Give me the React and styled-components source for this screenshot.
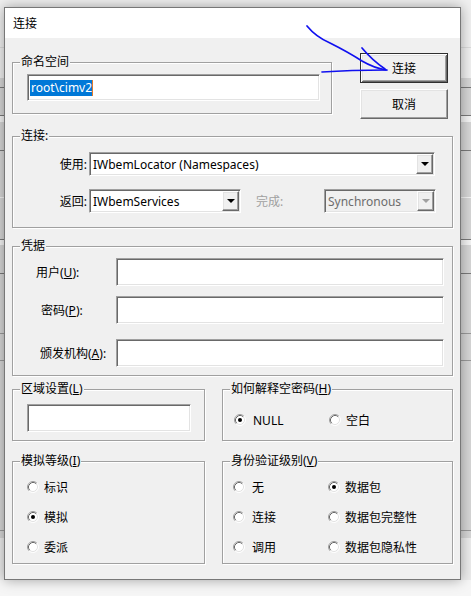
import React from "react";
import styled, { createGlobalStyle, css } from "styled-components";

const GlobalStyle = createGlobalStyle`
  html, body { margin: 0; padding: 0; }
  body {
    font-family: "Noto Sans", "Noto Sans CJK SC", sans-serif;
    font-size: 12px;
    color: #000;
  }
  * { box-sizing: border-box; }
`;

const raised = css`
  background: #f0f0f0;
  border: 1px solid;
  border-color: #ffffff #696969 #696969 #ffffff;
  box-shadow: inset -1px -1px 0 #a0a0a0, inset 1px 1px 0 #e3e3e3;
`;

const sunken = css`
  border: 1px solid;
  border-color: #a0a0a0 #ffffff #ffffff #a0a0a0;
  box-shadow: inset 1px 1px 0 #696969, inset -1px -1px 0 #e3e3e3;
`;

const Desktop = styled.div`
  position: relative;
  width: 471px;
  height: 596px;
  overflow: hidden;
  padding: 7px 0 0 4px;
  background:
    linear-gradient(to bottom,
      transparent 0 87px, #7a7a7a 87px 88px, transparent 88px 115px,
      #7a7a7a 115px 116px, #f4f4f4 116px 122px, transparent 122px 150px,
      #7a7a7a 150px 151px, transparent 151px 197px, #f4f4f4 197px 198px,
      transparent 198px 239px, #7a7a7a 239px 240px, #f4f4f4 240px 245px,
      transparent 245px 273px, #7a7a7a 273px 274px, transparent 274px 333px,
      #9a9a9a 333px 334px, transparent 334px 360px, #9a9a9a 360px 361px,
      transparent 361px 530px, #9a9a9a 530px 531px, transparent 531px),
    linear-gradient(to bottom,
      #f0f0f0 0 47px, #dcdcdc 47px 48px, #f0f0f0 48px 78px,
      #d6d6d6 78px 538px, #ececec 538px 580px, #f6f6f6 580px);
`;

const Dialog = styled.div`
  width: 457px;
  height: 573px;
  border: 1px solid #777777;
  background: #f0f0f0;
  box-shadow: 0 0 12px rgba(0, 0, 0, 0.35);
  display: flex;
  flex-direction: column;
`;

const TitleBar = styled.div`
  height: 30px;
  background: #ffffff;
  padding-left: 8px;
  display: flex;
  align-items: center;
  font-size: 12px;
`;

const Body = styled.div`
  flex: 1;
  padding: 15px 0 0 7px;
  display: flex;
  flex-direction: column;
`;

const Row = styled.div`
  display: flex;
  align-items: flex-start;
  gap: ${(p) => p.$gap || 0}px;
  margin-top: ${(p) => p.$mt || 0}px;
`;

const Group = styled.div`
  position: relative;
  width: ${(p) => p.$w}px;
  height: ${(p) => p.$h}px;
  margin-top: ${(p) => p.$mt || 0}px;
  border: 1px solid #a0a0a0;
  box-shadow: inset 1px 1px 0 #ffffff, 1px 1px 0 #ffffff;
  padding: ${(p) => p.$pad || "0"};
`;

const Caption = styled.span`
  position: absolute;
  top: -8px;
  left: 7px;
  padding: 0 1px;
  line-height: 14px;
  background: #f0f0f0;
  white-space: nowrap;
`;

const TextBox = styled.div`
  ${sunken};
  background: #ffffff;
  width: ${(p) => p.$w}px;
  height: ${(p) => p.$h}px;
  display: flex;
  align-items: center;
  padding-left: 2px;
  white-space: nowrap;
`;

const Selected = styled.span`
  background: #0078d7;
  color: #ffffff;
  line-height: 16px;
  padding: 0 0 0 1px;
  border-right: 1px solid #e07a2a;
`;

const ButtonColumn = styled.div`
  display: flex;
  flex-direction: column;
  gap: 6px;
`;

const Button = styled.div`
  width: 88px;
  height: 30px;
  display: flex;
  align-items: center;
  justify-content: center;
  ${(p) =>
    p.$default
      ? css`
          background: #f0f0f0;
          border: 1px solid #303030;
          box-shadow: inset 1px 1px 0 #ffffff, inset -1px -1px 0 #696969,
            inset 2px 2px 0 #e3e3e3, inset -2px -2px 0 #a0a0a0;
        `
      : raised};
`;

const FieldRow = styled.div`
  display: flex;
  align-items: center;
  margin-top: ${(p) => p.$mt || 0}px;
`;

const FieldLabel = styled.div`
  width: ${(p) => p.$w}px;
  margin-left: ${(p) => p.$ml || 0}px;
  padding-left: ${(p) => p.$indent || 0}px;
  padding-right: ${(p) => (p.$right ? 2 : 0)}px;
  text-align: ${(p) => (p.$right ? "right" : "left")};
  color: ${(p) => (p.$disabled ? "#a0a0a0" : "#000")};
  white-space: nowrap;
`;

const Combo = styled.div`
  ${sunken};
  width: ${(p) => p.$w}px;
  height: 24px;
  padding: 1px;
  display: flex;
  align-items: stretch;
  background: ${(p) => (p.$disabled ? "#f0f0f0" : "#ffffff")};
  color: ${(p) => (p.$disabled ? "#6d6d6d" : "#000")};
`;

const ComboText = styled.div`
  flex: 1;
  display: flex;
  align-items: center;
  padding-left: 2px;
  white-space: nowrap;
  overflow: hidden;
`;

const DropButton = styled.div`
  ${raised};
  width: 17px;
  display: flex;
  align-items: center;
  justify-content: center;
  &::after {
    content: "";
    border-left: 4px solid transparent;
    border-right: 4px solid transparent;
    border-top: 4px solid ${(p) => (p.$disabled ? "#a0a0a0" : "#000")};
  }
`;

const RadioGrid = styled.div`
  display: grid;
  grid-template-columns: ${(p) => p.$cols};
  grid-auto-rows: ${(p) => p.$rowH}px;
  align-items: center;
`;

const RadioItem = styled.div`
  display: flex;
  align-items: center;
  gap: ${(p) => p.$gap || 6}px;
  white-space: nowrap;
`;

const Overlay = styled.svg`
  position: absolute;
  left: 0;
  top: 0;
  pointer-events: none;
`;

function RadioIcon({ checked }) {
  return (
    <svg width="12" height="12" viewBox="0 0 12 12">
      <circle cx="6" cy="6" r="5" fill="#fff" />
      <path d="M2.11 9.89 A5.5 5.5 0 0 1 9.89 2.11" fill="none" stroke="#a0a0a0" />
      <path d="M9.89 2.11 A5.5 5.5 0 0 1 2.11 9.89" fill="none" stroke="#ffffff" />
      <path d="M2.82 9.18 A4.5 4.5 0 0 1 9.18 2.82" fill="none" stroke="#696969" />
      <path d="M9.18 2.82 A4.5 4.5 0 0 1 2.82 9.18" fill="none" stroke="#e3e3e3" />
      {checked && <circle cx="6" cy="6" r="2" fill="#000" />}
    </svg>
  );
}

function Radio({ label, checked, gap }) {
  return (
    <RadioItem $gap={gap}>
      <RadioIcon checked={checked} />
      <span>{label}</span>
    </RadioItem>
  );
}

export default function App() {
  return (
    <>
      <GlobalStyle />
      <Desktop>
        <Dialog>
          <TitleBar>连接</TitleBar>
          <Body>
            <Row $gap={28}>
              <Group $w={320} $h={52} $mt={9} $pad="11px 0 0 14px">
                <Caption>命名空间</Caption>
                <TextBox $w={293} $h={27}>
                  <Selected>root\cimv2</Selected>
                </TextBox>
              </Group>
              <ButtonColumn>
                <Button $default>连接</Button>
                <Button>取消</Button>
              </ButtonColumn>
            </Row>

            <Group $w={441} $h={92} $mt={17} $pad="15px 0 0 0">
              <Caption>连接:</Caption>
              <FieldRow>
                <FieldLabel $w={76} $right>使用:</FieldLabel>
                <Combo $w={346}>
                  <ComboText>IWbemLocator (Namespaces)</ComboText>
                  <DropButton />
                </Combo>
              </FieldRow>
              <FieldRow $mt={13}>
                <FieldLabel $w={76} $right>返回:</FieldLabel>
                <Combo $w={152}>
                  <ComboText>IWbemServices</ComboText>
                  <DropButton />
                </Combo>
                <FieldLabel $w={68} $ml={15} $disabled>完成:</FieldLabel>
                <Combo $w={112} $disabled>
                  <ComboText>Synchronous</ComboText>
                  <DropButton $disabled />
                </Combo>
              </FieldRow>
            </Group>

            <Group $w={441} $h={130} $mt={18} $pad="11px 0 0 0">
              <Caption>凭据</Caption>
              <FieldRow>
                <FieldLabel $w={103} $indent={23}>用户(<u>U</u>):</FieldLabel>
                <TextBox $w={328} $h={28} />
              </FieldRow>
              <FieldRow $mt={10}>
                <FieldLabel $w={103} $indent={28}>密码(<u>P</u>):</FieldLabel>
                <TextBox $w={328} $h={28} />
              </FieldRow>
              <FieldRow $mt={15}>
                <FieldLabel $w={103} $indent={27}>颁发机构(<u>A</u>):</FieldLabel>
                <TextBox $w={328} $h={28} />
              </FieldRow>
            </Group>

            <Row $gap={17} $mt={13}>
              <Group $w={193} $h={52} $pad="14px 0 0 14px">
                <Caption>区域设置(<u>L</u>)</Caption>
                <TextBox $w={164} $h={28} />
              </Group>
              <Group $w={231} $h={52} $pad="20px 0 0 11px">
                <Caption>如何解释空密码(<u>H</u>)</Caption>
                <RadioGrid $cols="95px auto" $rowH={20}>
                  <Radio label="NULL" checked gap={7} />
                  <Radio label="空白" gap={5} />
                </RadioGrid>
              </Group>
            </Row>

            <Row $gap={17} $mt={20}>
              <Group $w={193} $h={103} $pad="10px 0 0 14px">
                <Caption>模拟等级(<u>I</u>)</Caption>
                <RadioGrid $cols="auto" $rowH={30}>
                  <Radio label="标识" gap={5} />
                  <Radio label="模拟" checked gap={5} />
                  <Radio label="委派" gap={5} />
                </RadioGrid>
              </Group>
              <Group $w={231} $h={103} $pad="10px 0 0 10px">
                <Caption>身份验证级别(<u>V</u>)</Caption>
                <RadioGrid $cols="95px auto" $rowH={30}>
                  <Radio label="无" gap={7} />
                  <Radio label="数据包" checked gap={5} />
                  <Radio label="连接" gap={7} />
                  <Radio label="数据包完整性" gap={5} />
                  <Radio label="调用" gap={7} />
                  <Radio label="数据包隐私性" gap={5} />
                </RadioGrid>
              </Group>
            </Row>
          </Body>
        </Dialog>
        <Overlay width="471" height="596" viewBox="0 0 471 596">
          <g fill="none" stroke="#1010f0" strokeWidth="1.7" strokeLinecap="round" strokeLinejoin="round">
            <path d="M307 26 Q316 37 330 43 Q348 52 362 61 Q374 68 386 70" />
            <path d="M322 72 Q350 70 387 70" />
            <path d="M362 48 Q372 60 385 69" />
          </g>
        </Overlay>
      </Desktop>
    </>
  );
}
